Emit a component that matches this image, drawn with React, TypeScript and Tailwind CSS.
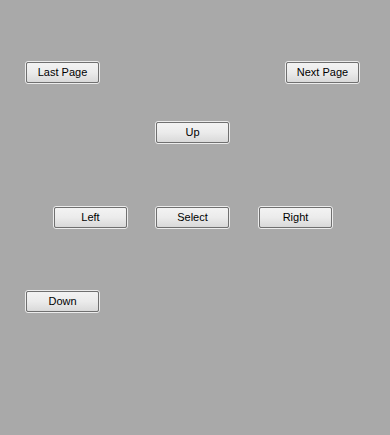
function Btn({ label }: { label: string }) {
  return (
    <div className="w-[75px] h-[23px] rounded-[3px] border border-[#ececec] p-0">
      <div className="h-full w-full rounded-[2px] border border-[#707070] bg-gradient-to-b from-[#f3f3f3] via-[#ebebeb] to-[#d9d9d9] flex items-center justify-center text-[11px] text-black leading-none">
        {label}
      </div>
    </div>
  );
}

export default function App() {
  return (
    <div
      className="w-[390px] h-[435px] bg-[#a9a9a9] pt-[61px] flex flex-col"
      style={{ fontFamily: '"Liberation Sans", Arial, sans-serif' }}
    >
      <div className="flex justify-between pl-[25px] pr-[30px]">
        <Btn label="Last Page" />
        <Btn label="Next Page" />
      </div>
      <div className="flex pl-[155px] mt-[37px]">
        <Btn label="Up" />
      </div>
      <div className="flex pl-[53px] mt-[62px] gap-[27px]">
        <Btn label="Left" />
        <Btn label="Select" />
        <div className="ml-px">
          <Btn label="Right" />
        </div>
      </div>
      <div className="flex pl-[25px] mt-[61px]">
        <Btn label="Down" />
      </div>
    </div>
  );
}
